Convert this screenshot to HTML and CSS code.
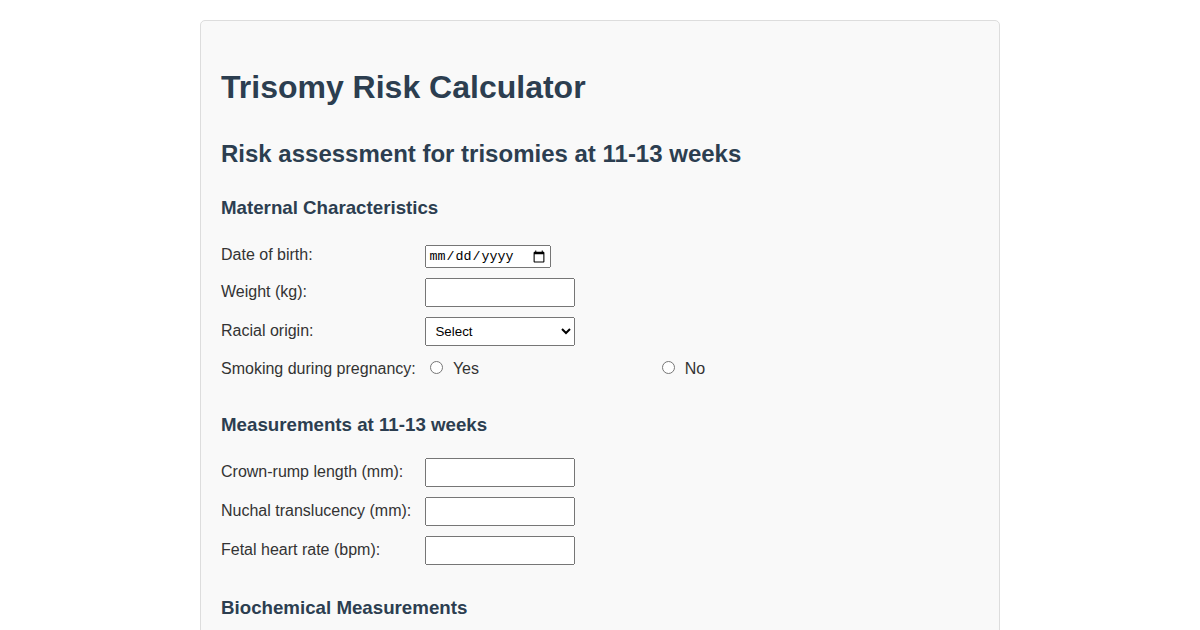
FILE: index.html
```html
<!DOCTYPE html>
<html lang="en">
<head>
    <meta charset="UTF-8">
    <title>Trisomy Risk Calculator</title>
    <meta name="viewport" content="width=device-width, initial-scale=1.0">
    <link rel="stylesheet" href="styles.css">
</head>
<body>
    <div class="container">
        <h1>Trisomy Risk Calculator</h1>
        <h2>Risk assessment for trisomies at 11-13 weeks</h2>
        <form id="riskCalculator">
            <div class="section">
                <h3>Maternal Characteristics</h3>
                <div class="form-group">
                    <label for="dob">Date of birth:</label>
                    <input type="date" id="dob" class="date">
                </div>
                <div class="form-group">
                    <label for="weight">Weight (kg):</label>
                    <input type="number" id="weight">
                </div>
                <div class="form-group">
                    <label for="race">Racial origin:</label>
                    <select id="race">
                        <option value="">Select</option>
                        <option value="white">White</option>
                        <option value="black">Black</option>
                        <option value="south-asian">South Asian</option>
                        <option value="east-asian">East Asian</option>
                        <option value="mixed">Mixed</option>
                    </select>
                </div>
                <div class="form-group">
                    <label>Smoking during pregnancy:</label>
                    <input type="radio" id="smokeYes" name="smoking" value="yes">
                    <label for="smokeYes">Yes</label>
                    <input type="radio" id="smokeNo" name="smoking" value="no">
                    <label for="smokeNo">No</label>
                </div>
            </div>
            <div class="section">
                <h3>Measurements at 11-13 weeks</h3>
                <div class="form-group">
                    <label for="crl">Crown-rump length (mm):</label>
                    <input type="number" id="crl">
                </div>
                <div class="form-group">
                    <label for="nt">Nuchal translucency (mm):</label>
                    <input type="number" id="nt">
                </div>
                <div class="form-group">
                    <label for="fhr">Fetal heart rate (bpm):</label>
                    <input type="number" id="fhr">
                </div>
            </div>
            <div class="section">
                <h3>Biochemical Measurements</h3>
                <div class="form-group">
                    <label for="hcg">Free β-hCG (MoM):</label>
                    <input type="number" id="hcg">
                </div>
                <div class="form-group">
                    <label for="pappa">PAPP-A (MoM):</label>
                    <input type="number" id="pappa">
                </div>
            </div>
            <button type="submit">Calculate Risk</button>
        </form>
    </div>
</body>
</html>
```

FILE: styles.css
```css
body {
    font-family: "Liberation Sans", Arial, sans-serif;
    line-height: 1.6;
    color: #333;
    background-color: #fff;
    margin: 0;
}
.container {
    max-width: 800px;
    margin: 20px auto;
    padding: 20px;
    background-color: #f9f9f9;
    border: 1px solid #ddd;
    border-radius: 5px;
    box-sizing: border-box;
}
h1, h2, h3 {
    color: #2c3e50;
}
.section {
    margin-bottom: 28px;
}
.form-group {
    margin-bottom: 10px;
}
label {
    display: inline-block;
    width: 200px;
}
input[type="number"],
select {
    width: 150px;
    padding: 5px;
    box-sizing: border-box;
}
input.date {
    font-family: "Liberation Mono", monospace;
    padding: 1px;
}
input[type="radio"] {
    margin-right: 5px;
}
button {
    margin-top: 10px;
    padding: 10px 20px;
    background-color: #2c3e50;
    color: #fff;
    border: none;
    border-radius: 5px;
    cursor: pointer;
    font-size: 1em;
}
```
